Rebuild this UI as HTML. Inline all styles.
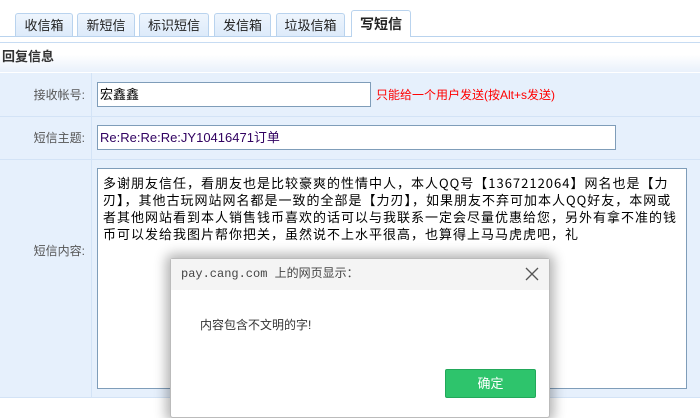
<!DOCTYPE html>
<html><head><meta charset="utf-8"><style>
*{margin:0;padding:0;box-sizing:border-box}
body{width:700px;height:412px;overflow:hidden;background:#fff;font-family:"Liberation Sans","Noto Sans CJK SC",sans-serif;font-size:13px;color:#333;position:relative}
.tab{position:absolute;top:13px;height:24px;border:1px solid #b9d3ee;border-bottom:none;border-radius:3px 3px 0 0;background:linear-gradient(#eef5fd,#dceafa);text-align:center;line-height:24px;font-size:13px;color:#222}
.tab.act{top:10px;height:27px;background:#fff;font-weight:bold;font-size:14px;line-height:26px}
.line{position:absolute;left:0;width:700px;top:36px;border-top:1px solid #b9d3ee}
.band{position:absolute;left:0;top:42px;width:700px;height:30px;border-top:1px solid #c7dcf3;background:linear-gradient(#fff 40%,#e9f1fb);font-weight:bold;font-size:13px;line-height:28px;padding-left:2px;color:#333}
.row{position:absolute;left:0;width:700px;background:#e6f0fc;border-bottom:1px solid #d3e3f6}
.lab{position:absolute;left:0;top:0;bottom:0;width:92px;border-right:1px solid #d3e3f6;text-align:right;padding-right:6px;color:#555;font-size:12px}
.inp{position:absolute;background:#fff;border:1px solid #7f9db9;font-size:13px;color:#000;padding-left:2px}
</style></head><body>
<div class="tab" style="left:15px;width:58px">收信箱</div>
<div class="tab" style="left:77px;width:58px">新短信</div>
<div class="tab" style="left:139px;width:70px">标识短信</div>
<div class="tab" style="left:214px;width:57px">发信箱</div>
<div class="tab" style="left:276px;width:69px">垃圾信箱</div>
<div class="line"></div>
<div class="tab act" style="left:351px;width:60px">写短信</div>
<div class="band">回复信息</div>
<div class="row" style="top:73px;height:44px"><div class="lab" style="line-height:44px">接收帐号:</div>
<div class="inp" style="left:97px;top:9px;width:274px;height:25px;line-height:23px">宏鑫鑫</div>
<div style="position:absolute;left:376px;top:0;line-height:44px;color:#f00;font-size:12px">只能给一个用户发送(按Alt+s发送)</div></div>
<div class="row" style="top:117px;height:43px"><div class="lab" style="line-height:43px">短信主题:</div>
<div class="inp" style="left:97px;top:8px;width:519px;height:25px;line-height:23px;color:#300060">Re:Re:Re:Re:JY10416471订单</div></div>
<div class="row" style="top:160px;height:238px"><div class="lab" style="line-height:182px">短信内容:</div>
<div class="inp" style="left:97px;top:8px;width:590px;height:221px;padding:5px 5px;line-height:17px;font-size:13px;letter-spacing:1px;white-space:nowrap;font-family:'Noto Sans CJK SC',sans-serif">多谢朋友信任，看朋友也是比较豪爽的性情中人，本人QQ号【1367212064】网名也是【力<br>刃】，其他古玩网站网名都是一致的全部是【力刃】，如果朋友不弃可加本人QQ好友，本网或<br>者其他网站看到本人销售钱币喜欢的话可以与我联系一定会尽量优惠给您，另外有拿不准的钱<br>币可以发给我图片帮你把关，虽然说不上水平很高，也算得上马马虎虎吧，礼</div></div>
<div style="position:absolute;left:0;top:398px;width:700px;height:14px;background:#fff"></div>
<div style="position:absolute;left:170px;top:258px;width:380px;height:160px;background:#fff;border:1px solid #bbb;border-radius:3px;box-shadow:0 0 12px 4px rgba(0,0,0,.3)">
<div style="height:31px;background:#f4f4f4;line-height:31px;padding-left:10px;font-size:12px;color:#444;font-family:'Liberation Mono','Noto Sans CJK SC',monospace">pay.cang.com 上的网页显示：</div>
<svg style="position:absolute;right:10px;top:8px" width="14" height="14"><path d="M1 1L13 13M13 1L1 13" stroke="#555" stroke-width="1.3"/></svg>
<div style="position:absolute;left:29px;top:57px;font-size:12px;color:#333">内容包含不文明的字!</div>
<div style="position:absolute;left:274px;top:110px;width:91px;height:29px;background:#2ec46c;border:1px solid #22a85a;border-radius:2px;color:#fff;text-align:center;line-height:27px;font-size:13px">确定</div>
</div>
</body></html>
